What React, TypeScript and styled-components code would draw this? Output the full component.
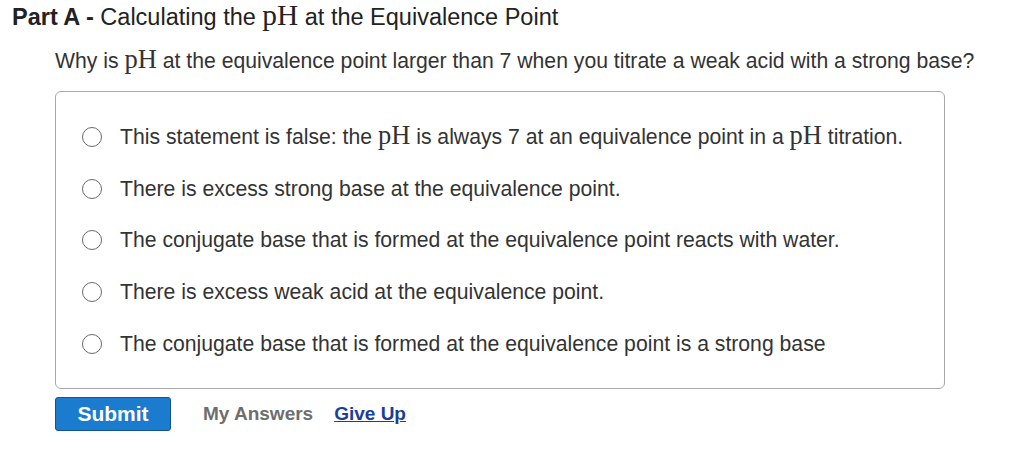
import React from 'react';
import styled, { createGlobalStyle } from 'styled-components';

const GlobalStyle = createGlobalStyle`
    body {
        margin: 0;
        background: #ffffff;
        font-family: "Liberation Sans", Arial, sans-serif;
        color: #333333;
    }
`;

const Page = styled.div`
    width: 1024px;
    height: 466px;
    padding: 3px 0 0 12px;
    box-sizing: border-box;
`;

const Title = styled.h2`
    margin: 0;
    font-size: 23.5px;
    font-weight: normal;
    line-height: 28px;
    color: #222222;
`;

const TitleBold = styled.span`
    font-weight: bold;
`;

const Body = styled.div`
    padding-left: 43px;
`;

const Question = styled.p`
    margin: 17px 0 0 0;
    font-size: 21.2px;
    line-height: 26px;
`;

const Math = styled.span`
    font-family: "Liberation Serif", "DejaVu Serif", serif;
    font-size: 1.25em;
    line-height: 0;
`;

const ChoiceBox = styled.div`
    margin-top: 17px;
    width: 890px;
    height: 298px;
    box-sizing: border-box;
    border: 1px solid #a8a8a8;
    border-radius: 6px;
    padding: 32px 0 0 26px;
    display: flex;
    flex-direction: column;
    gap: 25.7px;
`;

const Choice = styled.label`
    display: flex;
    align-items: center;
    gap: 18px;
    font-size: 21.2px;
    line-height: 26px;
    cursor: pointer;
`;

const Radio = styled.span`
    width: 20px;
    height: 20px;
    box-sizing: border-box;
    border: 1.5px solid #6b6b6b;
    border-radius: 50%;
    flex: none;
`;

const Actions = styled.div`
    margin-top: 8px;
    display: flex;
    align-items: center;
    gap: 32px;
`;

const SubmitButton = styled.button`
    width: 116px;
    height: 34px;
    background: #1a7bcf;
    border: 1px solid #16548f;
    border-radius: 3px;
    color: #ffffff;
    font-family: "Liberation Sans", Arial, sans-serif;
    font-weight: bold;
    font-size: 21px;
    padding: 0;
`;

const TextLink = styled.span<{ $active?: boolean }>`
    font-weight: bold;
    font-size: 19px;
    color: ${p => (p.$active ? '#1a3e9a' : '#6e6e6e')};
    text-decoration: ${p => (p.$active ? 'underline' : 'none')};
    margin-left: ${p => (p.$active ? '-11px' : '0')};
`;

const PH = () => <Math>pH</Math>;

const choices: React.ReactNode[] = [
    <>This statement is false: the <PH /> is always 7 at an equivalence point in a <PH /> titration.</>,
    <>There is excess strong base at the equivalence point.</>,
    <>The conjugate base that is formed at the equivalence point reacts with water.</>,
    <>There is excess weak acid at the equivalence point.</>,
    <>The conjugate base that is formed at the equivalence point is a strong base</>,
];

const App = () => {
    return (
        <Page>
            <GlobalStyle />
            <Title>
                <TitleBold>Part A -</TitleBold> Calculating the <PH /> at the Equivalence Point
            </Title>
            <Body>
                <Question>
                    Why is <PH /> at the equivalence point larger than 7 when you titrate a weak acid with a strong base?
                </Question>
                <ChoiceBox>
                    {choices.map((c, i) => (
                        <Choice key={i}>
                            <Radio />
                            <span>{c}</span>
                        </Choice>
                    ))}
                </ChoiceBox>
                <Actions>
                    <SubmitButton>Submit</SubmitButton>
                    <TextLink>My Answers</TextLink>
                    <TextLink $active>Give Up</TextLink>
                </Actions>
            </Body>
        </Page>
    );
};

export default App;
